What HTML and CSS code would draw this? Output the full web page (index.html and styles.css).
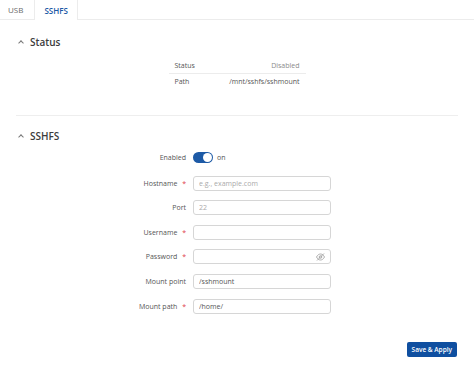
FILE: index.html
```html
<!DOCTYPE html>
<html lang="en">
<head>
	<meta charset="UTF-8">
	<title>SSHFS</title>
	<link rel="stylesheet" href="styles.css">
</head>
<body>
	<nav class="tabs">
		<a class="tab">USB</a>
		<a class="tab active">SSHFS</a>
	</nav>
	<main class="page">
		<section class="block">
			<h2 class="block-title"><span class="chev"></span>Status</h2>
			<table class="status">
				<tr><td>Status</td><td class="val">Disabled</td></tr>
				<tr><td>Path</td><td class="val dark">/mnt/sshfs/sshmount</td></tr>
			</table>
		</section>
		<hr class="sep">
		<section class="block">
			<h2 class="block-title"><span class="chev"></span>SSHFS</h2>
			<div class="form">
				<div class="row">
					<label>Enabled</label>
					<div class="switch"><span class="knob"></span></div>
					<span class="on">on</span>
				</div>
				<div class="row">
					<label>Hostname <i>*</i></label>
					<input class="field" placeholder="e.g., example.com">
				</div>
				<div class="row">
					<label>Port</label>
					<input class="field" placeholder="22">
				</div>
				<div class="row">
					<label>Username <i>*</i></label>
					<input class="field">
				</div>
				<div class="row">
					<label>Password <i>*</i></label>
					<div class="field pass">
						<svg width="9" height="8" viewBox="0 0 18 16"><path d="M1 8c2-4 5-6 8-6s6 2 8 6c-2 4-5 6-8 6S3 12 1 8z" fill="none" stroke="#9a9a9a" stroke-width="1.6"/><circle cx="9" cy="8" r="2.6" fill="none" stroke="#9a9a9a" stroke-width="1.6"/><path d="M2 15L16 1" stroke="#9a9a9a" stroke-width="1.6"/></svg>
					</div>
				</div>
				<div class="row">
					<label>Mount point</label>
					<input class="field" value="/sshmount">
				</div>
				<div class="row">
					<label>Mount path <i>*</i></label>
					<input class="field" value="/home/">
				</div>
			</div>
			<div class="actions">
				<button class="btn">Save &amp; Apply</button>
			</div>
		</section>
	</main>
</body>
</html>
```
FILE: styles.css
```css
body {
	margin: 0;
	background: #fff;
	font-family: "Open Sans", "Noto Sans", sans-serif;
	color: #4a4a4a;
	font-size: 7.5px;
}
nav.tabs {
	display: flex;
	height: 20px;
	border-bottom: 1px solid #ececec;
	box-sizing: border-box;
}
nav.tabs .tab {
	display: flex;
	align-items: center;
	padding: 0 8px;
	font-size: 8px;
	color: #6b6b6b;
}
nav.tabs .tab.active {
	color: #1d5aa6;
	border-left: 1px solid #ececec;
	border-right: 1px solid #ececec;
	margin-left: 3px;
	padding: 0 9px;
	height: 20px;
	background: #fff;
	font-weight: 600;
}
main.page {
	padding: 0 16px;
}
h2.block-title {
	margin: 0;
	display: flex;
	align-items: center;
	font-size: 10px;
	font-weight: 600;
	color: #3c3c3c;
	padding-left: 3px;
	height: 14px;
}
.chev {
	width: 3px;
	height: 3px;
	border-left: 1px solid #777;
	border-top: 1px solid #777;
	transform: rotate(45deg);
	margin: 2px 7px 0 0;
}
section.block:first-child h2 {
	margin-top: 15px;
}
table.status {
	border-collapse: collapse;
	width: 137px;
	margin: 9px auto 0;
}
table.status td {
	height: 15px;
	padding: 0 6px;
	font-size: 7px;
	color: #555;
}
table.status tr + tr td {
	border-top: 1px solid #ececec;
}
table.status td.val {
	text-align: right;
	color: #8a8a8a;
}
table.status td.val.dark {
	color: #555;
}
hr.sep {
	border: none;
	border-top: 1px solid #eeeeee;
	margin: 26px 0 13px;
}
.form {
	margin-top: 9px;
	display: flex;
	flex-direction: column;
	gap: 9.6px;
	padding-left: 90px;
}
.row {
	display: flex;
	align-items: center;
	height: 15px;
}
.row label {
	width: 87px;
	text-align: right;
	padding-right: 7px;
	box-sizing: border-box;
	font-size: 7px;
	color: #555;
}
.row label i {
	font-style: normal;
	color: #e0404a;
	margin-left: 3px;
}
.row:first-child {
	height: 11px;
	margin-bottom: 3px;
}
.switch {
	width: 20px;
	height: 11px;
	border-radius: 6px;
	background: #1d5aa6;
	display: flex;
	align-items: center;
	justify-content: flex-end;
	padding: 0 1px;
	box-sizing: border-box;
}
.knob {
	width: 9px;
	height: 9px;
	border-radius: 50%;
	background: #fff;
}
.on {
	margin-left: 4px;
	font-size: 7px;
	color: #555;
}
.field {
	width: 138px;
	height: 15px;
	box-sizing: border-box;
	border: 1px solid #d6d6d6;
	border-radius: 3px;
	padding: 0 5px;
	font-family: inherit;
	font-size: 7px;
	color: #555;
	outline: none;
	margin: 0;
}
.field::placeholder {
	color: #aaa;
}
.field.pass {
	display: flex;
	align-items: center;
	justify-content: flex-end;
}
.actions {
	display: flex;
	justify-content: flex-end;
	margin-top: 28px;
	padding-right: 1px;
}
.btn {
	background: #0f4fa0;
	color: #fff;
	border: none;
	border-radius: 2px;
	font-family: inherit;
	font-size: 6.5px;
	font-weight: 600;
	height: 15px;
	padding: 0 5px;
}
```
